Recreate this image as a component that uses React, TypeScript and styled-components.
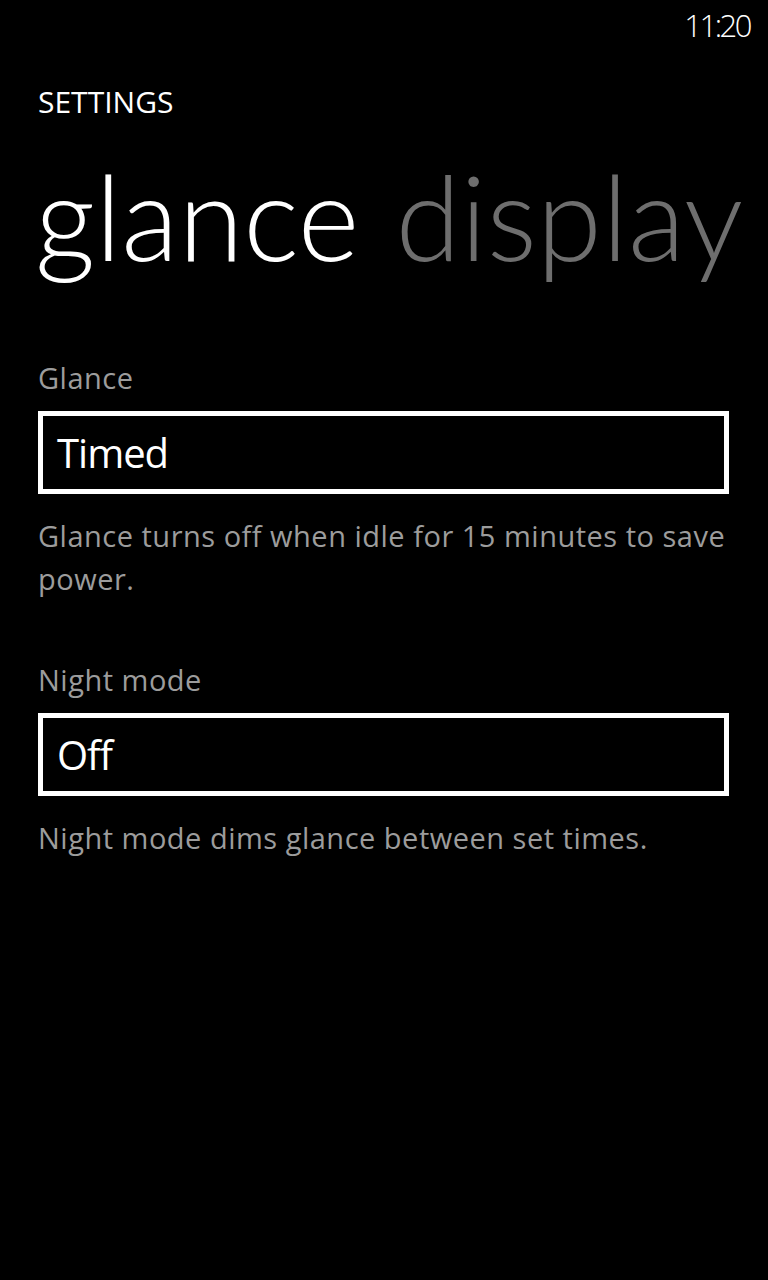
import React from 'react';
import styled, {createGlobalStyle} from 'styled-components';

const GlobalStyle = createGlobalStyle`
  html, body {
    margin: 0;
    padding: 0;
    background: #000;
  }
`;

type Setting = {
  label: string;
  value: string;
  help: string;
};

const settings: Setting[] = [
  {
    label: 'Glance',
    value: 'Timed',
    help: 'Glance turns off when idle for 15 minutes to save power.',
  },
  {
    label: 'Night mode',
    value: 'Off',
    help: 'Night mode dims glance between set times.',
  },
];

const App: React.FC = () => {
  return (
    <>
      <GlobalStyle />
      <Screen>
        <StatusBar>
          <Clock>11:20</Clock>
        </StatusBar>

        <Header>
          <AppTitle>SETTINGS</AppTitle>
          <PivotRow>
            <PivotItem $active>glance</PivotItem>
            <PivotItem>display</PivotItem>
          </PivotRow>
        </Header>

        <Content>
          {settings.map((s, i) => (
            <Field key={s.label} $first={i === 0}>
              <Label>{s.label}</Label>
              <Picker>{s.value}</Picker>
              <Help>{s.help}</Help>
            </Field>
          ))}
        </Content>
      </Screen>
    </>
  );
};

export default App;

const Screen = styled.div`
  width: 768px;
  min-height: 1280px;
  background: #000;
  color: #fff;
  font-family: 'Open Sans', 'Noto Sans', sans-serif;
  overflow: hidden;
`;

const StatusBar = styled.div`
  display: flex;
  justify-content: flex-end;
  padding: 5px 18px 0 0;
`;

const Clock = styled.span`
  font-size: 31px;
  line-height: 40px;
  font-weight: 300;
  letter-spacing: -2.5px;
`;

const Header = styled.div`
  padding-left: 38px;
`;

const AppTitle = styled.div`
  margin-top: 37px;
  font-size: 30px;
  line-height: 40px;
  font-weight: 400;
`;

const PivotRow = styled.div`
  display: flex;
  gap: 36px;
  margin: 29px 0 0 -3px;
  white-space: nowrap;
`;

const PivotItem = styled.span<{$active?: boolean}>`
  font-family: 'Lato', 'Open Sans', sans-serif;
  font-size: 118px;
  line-height: 130px;
  font-weight: 300;
  color: ${p => (p.$active ? '#fff' : '#6e6e6e')};
`;

const Content = styled.div`
  padding: 0 39px 0 38px;
`;

const Field = styled.section<{$first?: boolean}>`
  display: flex;
  flex-direction: column;
  margin-top: ${p => (p.$first ? '79px' : '62px')};
`;

const Label = styled.div`
  font-size: 29px;
  line-height: 36px;
  letter-spacing: 0.5px;
  color: #9c9c9c;
`;

const Picker = styled.div`
  box-sizing: border-box;
  margin-top: 15px;
  height: 83px;
  border: 5px solid #fff;
  padding-left: 14px;
  font-size: 40px;
  line-height: 73px;
  letter-spacing: -1px;
  color: #fff;
`;

const Help = styled.p`
  margin: 20px 0 0;
  font-size: 29px;
  line-height: 43px;
  letter-spacing: 0.5px;
  color: #9c9c9c;
`;
